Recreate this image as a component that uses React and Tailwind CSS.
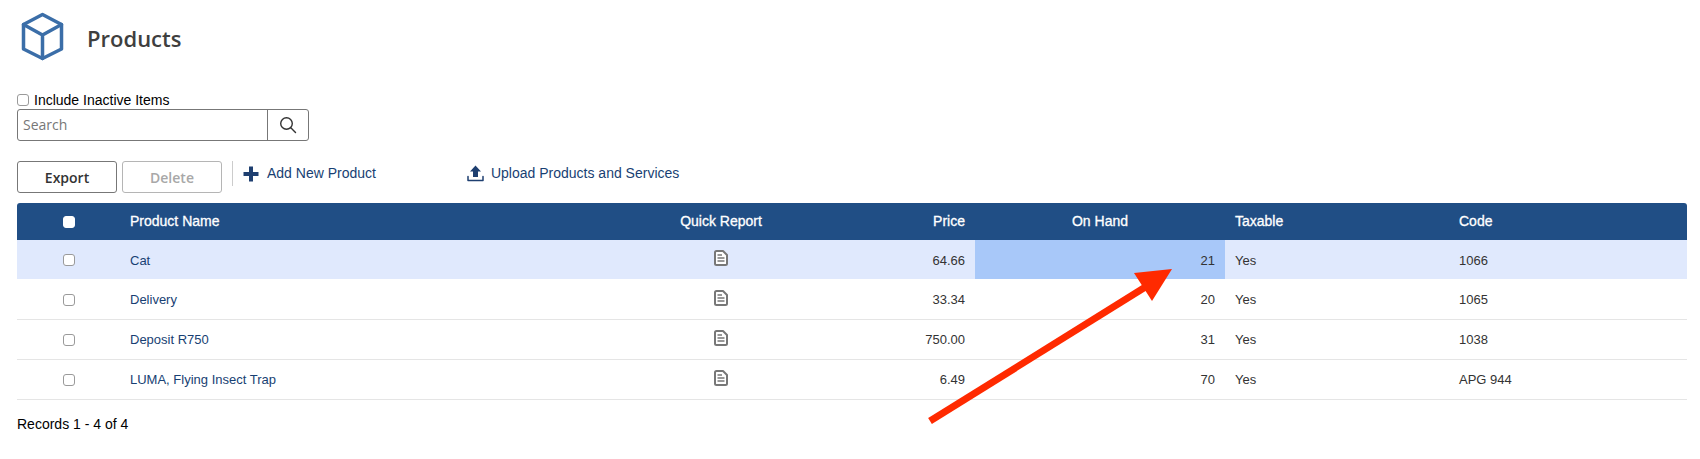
import React from "react";

const rows = [
  { name: "Cat", price: "64.66", qty: "21", code: "1066", selected: true },
  { name: "Delivery", price: "33.34", qty: "20", code: "1065" },
  { name: "Deposit R750", price: "750.00", qty: "31", code: "1038" },
  { name: "LUMA, Flying Insect Trap", price: "6.49", qty: "70", code: "APG 944" },
];

const CubeIcon = () => (
  <svg width="44" height="49" viewBox="0 0 44 49" fill="none" stroke="#3b6ea8" strokeWidth="3.500" strokeLinejoin="round" strokeLinecap="round">
    <path d="M21.500 2.500 L40.500 12.500 V37 L21.500 46.500 L2.500 37 V12.500 Z" />
    <path d="M2.500 12.500 L21.500 23 L40.500 12.500 M21.500 23 V46.500" />
  </svg>
);

const SearchIcon = () => (
  <svg width="18" height="18" viewBox="0 0 18 18" fill="none" stroke="#333" strokeWidth="1.4" strokeLinecap="round">
    <circle cx="7.500" cy="7.500" r="5.800" />
    <path d="M11.800 11.800 L16.500 16.500" />
  </svg>
);

const PlusIcon = () => (
  <svg width="16" height="16" viewBox="0 0 16 16" fill="#1e3f70">
    <path d="M6 0.500 H10 V6 H15.500 V10 H10 V15.500 H6 V10 H0.500 V6 H6 Z" />
  </svg>
);

const UploadIcon = () => (
  <svg width="17" height="17" viewBox="0 0 17 17" fill="none">
    <path d="M8.500 0.500 L14 6.500 H11 V12 H6 V6.500 H3 Z" fill="#1e3f70" />
    <path d="M1 11.500 V15.500 H16 V11.500" stroke="#1e3f70" strokeWidth="1.500" strokeLinecap="round" strokeLinejoin="round" />
  </svg>
);

const ReportIcon = () => (
  <svg width="14" height="16" viewBox="0 0 14 16" fill="none" stroke="#777" className="mx-auto mb-[4px] block">
    <path d="M2.500 1 H9 L13 5 V13.500 Q13 15 11.500 15 H2.500 Q1 15 1 13.500 V2.500 Q1 1 2.500 1 Z" fill="#fff" strokeWidth="2" strokeLinejoin="round" />
    <path d="M3.500 5 H8 M3.500 8 H10.500 M3.500 11 H10.500" strokeWidth="1.300" />
  </svg>
);

const Box = ({ white }) => (
  <span className={`mx-auto block h-[12px] w-[12px] rounded-[3px] border ${white ? "border-white bg-white" : "border-[#9a9a9a] bg-white"}`} />
);

const thText = "text-[14px] font-normal [-webkit-text-stroke:0.3px_white]";

export default function App() {
  return (
    <div className="relative h-[459px] bg-white pl-[17px] pr-[12px] font-['Liberation_Sans',Arial,sans-serif] text-[13px] text-[#333]">
      {/* title */}
      <div className="flex h-[86px] items-start pl-[4px] pt-[12px]">
        <CubeIcon />
        <h1 className="ml-[22px] mt-[11px] font-['Open_Sans',sans-serif] text-[22px] font-semibold leading-[30px] text-[#3f3f3f]">
          Products
        </h1>
      </div>

      <label className="mt-[6px] flex h-[16px] items-center gap-[5px] text-[14px] leading-[16px] text-black">
        <span className="h-[12px] w-[12px] rounded-[3px] border border-[#9a9a9a] bg-white" />
        Include Inactive Items
      </label>

      <div className="mt-[1px] flex h-[32px] w-[292px] rounded-[3px] border border-[#777]">
        <div className="flex flex-1 items-center border-r border-[#777] pb-[2px] pl-[5px] font-['Open_Sans',sans-serif] text-[14px] text-[#777]">
          Search
        </div>
        <div className="flex w-[40px] items-center justify-center">
          <SearchIcon />
        </div>
      </div>

      {/* toolbar */}
      <div className="mt-[20px] flex h-[32px] items-start">
        <button className="h-[32px] w-[100px] rounded-[3px] border border-[#777] font-['Open_Sans',sans-serif] text-[14px] font-semibold text-[#333]">
          Export
        </button>
        <button className="ml-[5px] h-[32px] w-[100px] rounded-[3px] border border-[#b5b5b5] font-['Open_Sans',sans-serif] text-[14px] font-semibold text-[#a8a8a8]">
          Delete
        </button>
        <span className="ml-[10px] h-[25px] w-px bg-[#ccc]" />
        <a className="ml-[10px] flex h-[25px] items-center gap-[8px] text-[14px] text-[#183f73]">
          <PlusIcon />
          Add New Product
        </a>
        <a className="ml-[91px] flex h-[25px] items-center gap-[7px] text-[14px] text-[#183f73]">
          <UploadIcon />
          Upload Products and Services
        </a>
      </div>

      {/* table */}
      <table className="mt-[10px] w-[1670px] table-fixed border-collapse">
        <colgroup>
          <col className="w-[103px]" />
          <col className="w-[541px]" />
          <col className="w-[120px]" />
          <col className="w-[194px]" />
          <col className="w-[250px]" />
          <col className="w-[224px]" />
          <col className="w-[238px]" />
        </colgroup>
        <thead>
          <tr className="h-[37px] bg-[#204e85] text-white">
            <th className="rounded-tl-[3px]"><Box white /></th>
            <th className={`px-[10px] text-left ${thText}`}>Product Name</th>
            <th className={`text-center ${thText}`}>Quick Report</th>
            <th className={`px-[10px] text-right ${thText}`}>Price</th>
            <th className={`text-center ${thText}`}>On Hand</th>
            <th className={`px-[10px] text-left ${thText}`}>Taxable</th>
            <th className={`rounded-tr-[3px] px-[10px] text-left ${thText}`}>Code</th>
          </tr>
        </thead>
        <tbody>
          {rows.map((r) => (
            <tr key={r.name} className={`border-b border-[#e5e5e5] ${r.selected ? "h-[39px] bg-[#e0e9fd] border-b-white" : "h-[40px]"}`}>
              <td className="pt-[2px]"><Box /></td>
              <td className="px-[10px] pt-[2px] text-[#183f73]">{r.name}</td>
              <td className="pt-[2px]"><ReportIcon /></td>
              <td className="px-[10px] pt-[2px] text-right">{r.price}</td>
              <td className={`px-[10px] pt-[2px] text-right ${r.selected ? "bg-[#a8c8f9]" : ""}`}>{r.qty}</td>
              <td className="px-[10px] pt-[2px]">Yes</td>
              <td className="px-[10px] pt-[2px]">{r.code}</td>
            </tr>
          ))}
        </tbody>
      </table>

      <p className="mt-[16px] text-[14px] leading-[16px] text-black">Records 1 - 4 of 4</p>

      {/* red annotation arrow drawn over the table */}
      <svg className="absolute left-[925px] top-[262px]" width="255" height="165" viewBox="0 0 255 165">
        <path d="M5 159 L222 24" stroke="#ff2a00" strokeWidth="7" fill="none" />
        <path d="M209 11 L247 7 L227 39 Z" fill="#ff2a00" />
      </svg>
    </div>
  );
}
